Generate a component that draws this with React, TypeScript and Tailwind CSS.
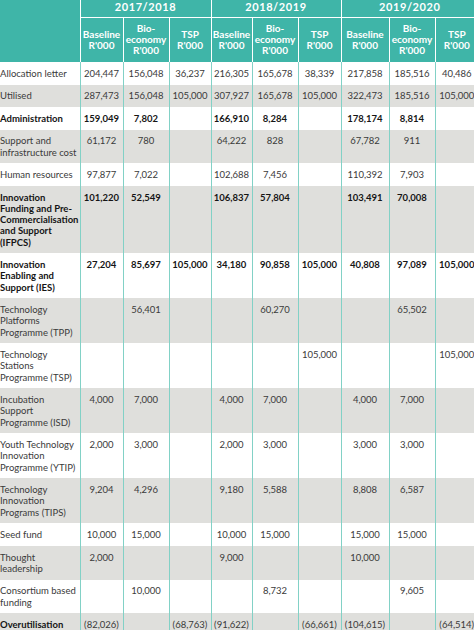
import React from 'react';

type Row = {
  label: string[];
  bold?: boolean;
  boldValues?: boolean;
  v: string[];
};

const ROWS: Row[] = [
  { label: ['Allocation letter'], v: ['204,447', '156,048', '36,237', '216,305', '165,678', '38,339', '217,858', '185,516', '40,486'] },
  { label: ['Utilised'], v: ['287,473', '156,048', '105,000', '307,927', '165,678', '105,000', '322,473', '185,516', '105,000'] },
  { label: ['Administration'], bold: true, boldValues: true, v: ['159,049', '7,802', '', '166,910', '8,284', '', '178,174', '8,814', ''] },
  { label: ['Support and', 'infrastructure cost'], v: ['61,172', '780', '', '64,222', '828', '', '67,782', '911', ''] },
  { label: ['Human resources'], v: ['97,877', '7,022', '', '102,688', '7,456', '', '110,392', '7,903', ''] },
  {
    label: ['Innovation', 'Funding and Pre-', 'Commercialisation', 'and Support', '(IFPCS)'],
    bold: true,
    boldValues: true,
    v: ['101,220', '52,549', '', '106,837', '57,804', '', '103,491', '70,008', ''],
  },
  {
    label: ['Innovation', 'Enabling and', 'Support (IES)'],
    bold: true,
    boldValues: true,
    v: ['27,204', '85,697', '105,000', '34,180', '90,858', '105,000', '40,808', '97,089', '105,000'],
  },
  { label: ['Technology', 'Platforms', 'Programme (TPP)'], v: ['', '56,401', '', '', '60,270', '', '', '65,502', ''] },
  { label: ['Technology', 'Stations', 'Programme (TSP)'], v: ['', '', '', '', '', '105,000', '', '', '105,000'] },
  { label: ['Incubation', 'Support', 'Programme (ISD)'], v: ['4,000', '7,000', '', '4,000', '7,000', '', '4,000', '7,000', ''] },
  { label: ['Youth Technology', 'Innovation', 'Programme (YTIP)'], v: ['2,000', '3,000', '', '2,000', '3,000', '', '3,000', '3,000', ''] },
  { label: ['Technology', 'Innovation', 'Programs (TIPS)'], v: ['9,204', '4,296', '', '9,180', '5,588', '', '8,808', '6,587', ''] },
  { label: ['Seed fund'], v: ['10,000', '15,000', '', '10,000', '15,000', '', '15,000', '15,000', ''] },
  { label: ['Thought', 'leadership'], v: ['2,000', '', '', '9,000', '', '', '10,000', '', ''] },
  { label: ['Consortium based', 'funding'], v: ['', '10,000', '', '', '8,732', '', '', '9,605', ''] },
  {
    label: ['Overutilisation'],
    bold: true,
    v: ['(82,026)', '', '(68,763)', '(91,622)', '', '(66,661)', '(104,615)', '', '(64,514)'],
  },
];

const YEARS = ['2017/2018', '2018/2019', '2019/2020'];
const SUB = [['Baseline', "R'000"], ['Bio-', 'economy', "R'000"], ['TSP', "R'000"]];

const cell = 'align-top pt-[5.75px] pb-[5.5px] px-0 text-[9.5px] leading-[11.25px] whitespace-nowrap';

const App: React.FC = () => {
  return (
    <div className="w-[474px] h-[630px] overflow-hidden bg-white font-['Lato',sans-serif]">
      <table className="table-fixed border-collapse w-[478px]">
        <colgroup>
          <col className="w-[80px]" />
          <col className="w-[43px]" />
          <col className="w-[46px]" />
          <col className="w-[42px]" />
          <col className="w-[41px]" />
          <col className="w-[46px]" />
          <col className="w-[43px]" />
          <col className="w-[48px]" />
          <col className="w-[46px]" />
          <col className="w-[43px]" />
        </colgroup>
        <thead className="bg-[#3fb5a8] text-white font-bold">
          <tr className="h-[17px]">
            <th rowSpan={2} />
            {YEARS.map(y => (
              <th
                key={y}
                colSpan={3}
                className="border-l border-b border-white text-[11px] leading-[11px] pb-[4px] pt-[1px] font-bold tracking-[0.6px]"
              >
                {y}
              </th>
            ))}
          </tr>
          <tr className="h-[45px]">
            {YEARS.map(y =>
              SUB.map((s, i) => (
                <th key={y + i} className="border-l border-white text-[10px] leading-[11px] font-bold align-middle px-0">
                  {s.map(line => (
                    <div key={line}>{line}</div>
                  ))}
                </th>
              ))
            )}
          </tr>
        </thead>
        <tbody>
          {ROWS.map((r, idx) => (
            <tr key={r.label.join(' ')} className={idx % 2 === 0 ? 'bg-white' : 'bg-[#dfdfdc]'}>
              <td className={`${cell} ${r.bold ? 'font-bold text-[#151515]' : 'text-[#3a3a3a]'}`}>
                {r.label.map(line => (
                  <div key={line}>{line}</div>
                ))}
              </td>
              {r.v.map((val, i) => (
                <td
                  key={i}
                  className={`${cell} text-center border-l border-[#82d1c6] ${
                    r.boldValues ? 'font-bold text-[#151515]' : 'text-[#3a3a3a]'
                  }`}
                >
                  {val}
                </td>
              ))}
            </tr>
          ))}
        </tbody>
      </table>
    </div>
  );
};

export default App;
